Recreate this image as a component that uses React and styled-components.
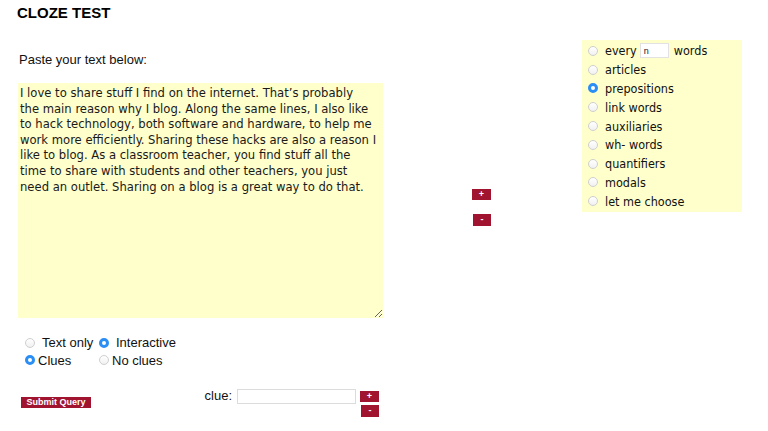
import styled, { createGlobalStyle } from "styled-components";

const GlobalStyle = createGlobalStyle`
  body {
    margin: 0;
    background: #fff;
    color: #111;
    font-family: "Liberation Sans", Arial, sans-serif;
  }
`;

const Page = styled.div`
  padding-top: 4px;
`;

const Title = styled.h1`
  margin: 0 0 0 17px;
  font-size: 15px;
  line-height: 18px;
  font-weight: bold;
  color: #000;
`;

const Main = styled.div`
  display: flex;
  align-items: flex-start;
  padding-left: 18px;
`;

const LeftColumn = styled.div`
  display: flex;
  flex-direction: column;
  width: 365px;
`;

const PasteLabel = styled.div`
  margin-top: 30px;
  padding-left: 1px;
  font-size: 13px;
  line-height: 16px;
`;

const TextBox = styled.textarea`
  margin: 15px 0 0;
  width: 365px;
  height: 235px;
  box-sizing: border-box;
  border: none;
  outline: none;
  background: #ffffcc;
  padding: 2px 1px 2px 2px;
  font-family: "DejaVu Sans Condensed", "DejaVu Sans", Tahoma, sans-serif;
  font-size: 12.9px;
  line-height: 15.6px;
  color: #1a1a1a;
  resize: both;
`;

const Options = styled.div`
  display: grid;
  grid-template-columns: 74px auto;
  grid-auto-rows: 17.5px;
  align-items: center;
  margin: 16px 0 0 7px;
`;

const Choice = styled.label`
  display: flex;
  align-items: center;
  font-size: 13px;
  color: #111;
  gap: ${(p) => p.$gap}px;
`;

const Radio = styled.input.attrs({ type: "radio" })`
  appearance: none;
  margin: 0;
  width: 10px;
  height: 10px;
  border-radius: 50%;
  box-sizing: border-box;
  border: 1px solid #cfcfcf;
  background: linear-gradient(#fff, #f1f1f1);
  flex-shrink: 0;

  &:checked {
    border: 3px solid #2a8ef5;
    background: #fff;
  }
`;

const BottomRow = styled.div`
  display: flex;
  align-items: flex-start;
  margin-top: 20px;
`;

const RedButton = styled.button`
  display: flex;
  align-items: center;
  justify-content: center;
  width: ${(p) => p.$w}px;
  height: ${(p) => p.$h}px;
  padding: 0;
  border: none;
  background: #a0142f;
  color: #fff;
  font-family: "Liberation Sans", Arial, sans-serif;
  font-weight: bold;
  font-size: 9px;
  line-height: 1;
  cursor: pointer;
`;

const SubmitButton = styled(RedButton)`
  margin: 8px 0 0 3px;
`;

const ClueGroup = styled.div`
  display: flex;
  align-items: flex-start;
  margin: 0 4px 0 auto;
`;

const ClueLabel = styled.span`
  font-size: 13px;
  line-height: 15px;
  margin-top: -1px;
`;

const ClueInput = styled.input`
  margin: 0 0 0 5px;
  width: 119px;
  height: 15px;
  box-sizing: border-box;
  border: 1px solid #dcdcdc;
  padding: 0 3px;
  font-size: 11px;
`;

const PlusMinus = styled.div`
  display: flex;
  flex-direction: column;
  align-items: flex-end;
  gap: ${(p) => p.$gap}px;
  margin: ${(p) => p.$margin};
`;

const RightPanel = styled.div`
  margin: 18px 0 0 91px;
  width: 160px;
  box-sizing: border-box;
  padding: 1.5px 0 1px 6px;
  background: #ffffcc;
`;

const PanelRow = styled.label`
  display: flex;
  align-items: center;
  height: 18.8px;
  font-family: "DejaVu Sans Condensed", "DejaVu Sans", Tahoma, sans-serif;
  font-size: 12.5px;
  color: #111;

  ${Radio} {
    margin-right: 7px;
  }
`;

const NInput = styled.input`
  margin: 0 5px 0 3px;
  width: 29px;
  height: 15px;
  box-sizing: border-box;
  border: 1px solid #e2e2e2;
  padding: 0 3px;
  font-size: 9px;
  color: #222;
`;

const categories = [
  "articles",
  "prepositions",
  "link words",
  "auxiliaries",
  "wh- words",
  "quantifiers",
  "modals",
  "let me choose",
];

// lines broken as in the original textarea
const sample = [
  "I love to share stuff I find on the internet. That\u2019s probably",
  "the main reason why I blog. Along the same lines, I also like",
  "to hack technology, both software and hardware, to help me",
  "work more efficiently. Sharing these hacks are also a reason I",
  "like to blog. As a classroom teacher, you find stuff all the",
  "time to share with students and other teachers, you just",
  "need an outlet. Sharing on a blog is a great way to do that.",
].join("\n");

export default function App() {
  return (
    <Page>
      <GlobalStyle />
      <Title>CLOZE TEST</Title>
      <Main>
        <LeftColumn>
          <PasteLabel>Paste your text below:</PasteLabel>
          <TextBox defaultValue={sample} spellCheck={false} />
          <Options>
            <Choice $gap={7}>
              <Radio name="mode" /> Text only
            </Choice>
            <Choice $gap={7}>
              <Radio name="mode" defaultChecked /> Interactive
            </Choice>
            <Choice $gap={3}>
              <Radio name="clues" defaultChecked />
              Clues
            </Choice>
            <Choice $gap={3}>
              <Radio name="clues" />
              No clues
            </Choice>
          </Options>
          <BottomRow>
            <SubmitButton $w={70} $h={11}>
              Submit Query
            </SubmitButton>
            <ClueGroup>
              <ClueLabel>clue:</ClueLabel>
              <ClueInput />
              <PlusMinus $gap={3.3} $margin="1.7px 0 0 4px">
                <RedButton $w={19} $h={11}>+</RedButton>
                <RedButton $w={18} $h={11.7}>-</RedButton>
              </PlusMinus>
            </ClueGroup>
          </BottomRow>
        </LeftColumn>

        <PlusMinus $gap={14} $margin="167px 0 0 89px">
          <RedButton $w={19} $h={11}>+</RedButton>
          <RedButton $w={18} $h={11.7}>-</RedButton>
        </PlusMinus>

        <RightPanel>
          <PanelRow>
            <Radio name="pick" />
            every
            <NInput defaultValue="n" />
            words
          </PanelRow>
          {categories.map((c) => (
            <PanelRow key={c}>
              <Radio name="pick" defaultChecked={c === "prepositions"} />
              {c}
            </PanelRow>
          ))}
        </RightPanel>
      </Main>
    </Page>
  );
}
